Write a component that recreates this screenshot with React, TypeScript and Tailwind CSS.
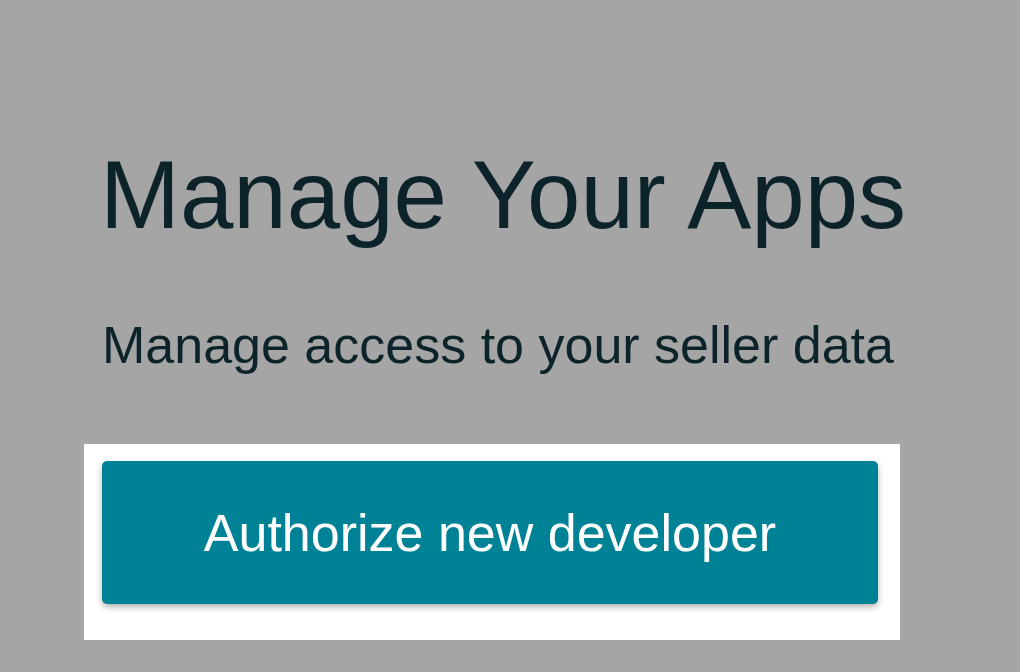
export default function App() {
  return (
    <div
      className="w-[1020px] h-[672px] overflow-hidden bg-[#a5a5a5] pl-[100px] pt-[147px]"
      style={{ fontFamily: '"Liberation Sans", Arial, sans-serif' }}
    >
      <h1 className="text-[96px] leading-none text-[#0c2329] whitespace-nowrap">Manage Your Apps</h1>
      <p className="mt-[76px] ml-[2px] text-[52px] leading-none text-[#0c2329] whitespace-nowrap">
        Manage access to your seller data
      </p>
      <div className="mt-[73px] -ml-[16px] w-[816px] h-[196px] bg-white pl-[18px] pt-[17px]">
        <button className="w-[776px] h-[143px] rounded-[5px] bg-[#008296] shadow-[0_3px_6px_rgba(0,0,0,0.3)] flex items-center justify-center text-[52px] leading-none text-white">
          Authorize new developer
        </button>
      </div>
    </div>
  );
}
